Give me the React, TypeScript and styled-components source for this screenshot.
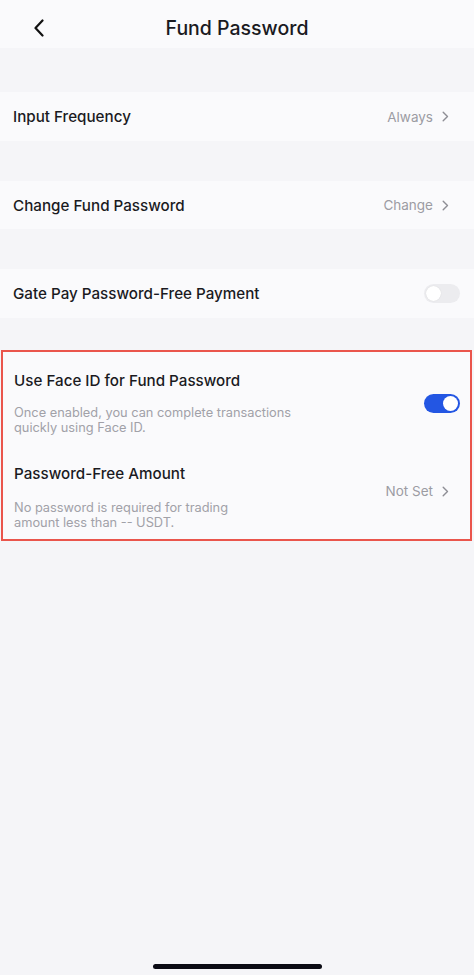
import React from "react";
import styled, { createGlobalStyle } from "styled-components";

const Global = createGlobalStyle`
  html, body { margin: 0; padding: 0; background: #f5f5f8; }
  body { font-family: Inter, "Noto Sans", "Liberation Sans", sans-serif; -webkit-font-smoothing: antialiased; }
  * { box-sizing: border-box; }
`;

const Page = styled.div`
  width: 474px;
  height: 975px;
  background: #f5f5f8;
  display: flex;
  flex-direction: column;
  position: relative;
  overflow: hidden;
`;

const Header = styled.header`
  height: 48px;
  background: #fafafc;
  display: flex;
  align-items: center;
  justify-content: center;
  position: relative;
`;

const BackBtn = styled.button`
  position: absolute;
  left: 28px;
  top: 12px;
  width: 22px;
  height: 32px;
  border: 0;
  background: none;
  padding: 0;
  display: flex;
  align-items: center;
  justify-content: center;
`;

const Title = styled.h1`
  margin: 0;
  margin-top: 8px;
  font-size: 19.5px;
  font-weight: 500;
  color: #1a1a1f;
`;

const Gap = styled.div<{ $h: number }>`
  height: ${(p) => p.$h}px;
  flex: none;
`;

const Row = styled.div<{ $h: number }>`
  height: ${(p) => p.$h}px;
  background: #fafafc;
  display: flex;
  align-items: center;
  justify-content: space-between;
  padding: 0 13px 0 13px;
`;

const Label = styled.span`
  font-size: 15.2px;
  font-weight: 500;
  color: #1a1a1f;
`;

const Value = styled.span<{ $lift?: number }>`
  display: flex;
  align-items: center;
  gap: 9px;
  font-size: 13.5px;
  color: #9c9ca3;
  padding-right: 12px;
  margin-bottom: ${(p) => p.$lift ?? 0}px;
`;

const Toggle = styled.span<{ $on?: boolean }>`
  width: 36px;
  height: 19px;
  border-radius: 10px;
  background: ${(p) => (p.$on ? "#2356e3" : "#ececef")};
  position: relative;
  flex: none;
  margin-right: 1px;
  &::after {
    content: "";
    position: absolute;
    top: 2px;
    ${(p) => (p.$on ? "right: 2px;" : "left: 2px;")}
    width: 15px;
    height: 15px;
    border-radius: 50%;
    background: #fff;
    box-shadow: ${(p) => (p.$on ? "none" : "0 0 1px rgba(0,0,0,0.15)")};
  }
`;

const Highlight = styled.section`
  margin: 0 2px 0 1px;
  border: 2px solid #ea554c;
  background: #fafafc;
  display: flex;
  flex-direction: column;
  padding: 19px 0 9px;
`;

const DetailRow = styled.div<{ $gap: number }>`
  display: flex;
  align-items: center;
  justify-content: space-between;
  padding: 0 9px 0 11px;
  margin-bottom: ${(p) => p.$gap}px;
`;

const TextCol = styled.div<{ $gap: number }>`
  display: flex;
  flex-direction: column;
  gap: ${(p) => p.$gap}px;
`;

const Desc = styled.p<{ $maxW: number }>`
  margin: 0;
  font-size: 12.8px;
  line-height: 15px;
  color: #a1a1a8;
  max-width: ${(p) => p.$maxW}px;
`;

const HomeBar = styled.div`
  position: absolute;
  bottom: 6px;
  left: 153px;
  width: 169px;
  height: 5px;
  border-radius: 3px;
  background: #0b0b14;
`;

const Chevron = () => (
  <svg width="7" height="11" viewBox="0 0 7 11" fill="none">
    <path d="M1.2 1.2L5.5 5.5L1.2 9.8" stroke="#8e8e95" strokeWidth="1.4" strokeLinecap="round" strokeLinejoin="round" />
  </svg>
);

export default function App() {
  return (
    <Page>
      <Global />
      <Header>
        <BackBtn aria-label="Back">
          <svg width="12" height="18" viewBox="0 0 12 18" fill="none">
            <path d="M9.5 1.5L2.5 9L9.5 16.5" stroke="#111" strokeWidth="2.2" strokeLinecap="round" strokeLinejoin="round" />
          </svg>
        </BackBtn>
        <Title>Fund Password</Title>
      </Header>
      <Gap $h={44} />
      <Row $h={49}>
        <Label>Input Frequency</Label>
        <Value>Always <Chevron /></Value>
      </Row>
      <Gap $h={40} />
      <Row $h={48}>
        <Label>Change Fund Password</Label>
        <Value>Change <Chevron /></Value>
      </Row>
      <Gap $h={40} />
      <Row $h={49}>
        <Label>Gate Pay Password-Free Payment</Label>
        <Toggle />
      </Row>
      <Gap $h={32} />
      <Highlight>
        <DetailRow $gap={29}>
          <TextCol $gap={15}>
            <Label>Use Face ID for Fund Password</Label>
            <Desc $maxW={300}>Once enabled, you can complete transactions quickly using Face ID.</Desc>
          </TextCol>
          <Toggle $on />
        </DetailRow>
        <DetailRow $gap={0}>
          <TextCol $gap={17}>
            <Label>Password-Free Amount</Label>
            <Desc $maxW={240}>No password is required for trading amount less than -- USDT.</Desc>
          </TextCol>
          <Value $lift={12}>Not Set <Chevron /></Value>
        </DetailRow>
      </Highlight>
      <HomeBar />
    </Page>
  );
}
